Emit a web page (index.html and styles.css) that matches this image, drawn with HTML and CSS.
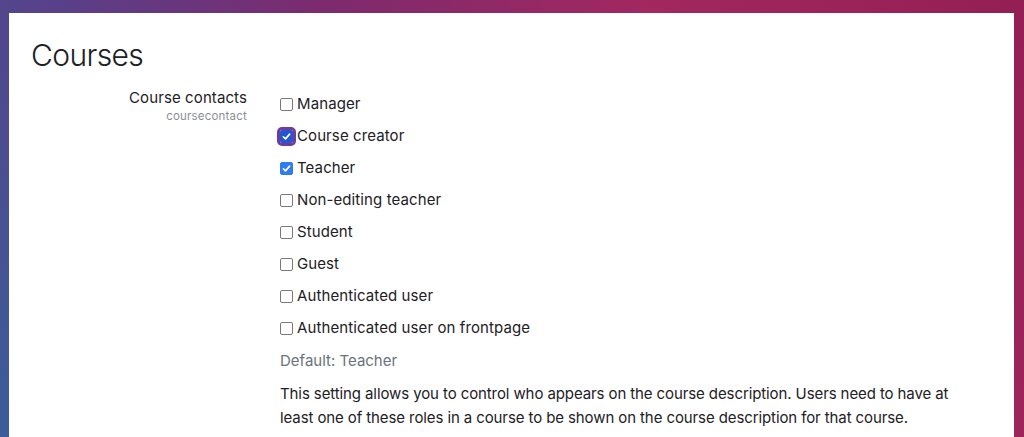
FILE: index.html
```html
<!DOCTYPE html>
<html lang="en">
<head>
<meta charset="utf-8">
<title>Courses</title>
<link rel="stylesheet" href="styles.css">
</head>
<body>
<main class="card">
  <h2 class="title">Courses</h2>
  <div class="setting">
    <div class="label-col">
      <div class="label">Course contacts</div>
      <div class="sublabel">coursecontact</div>
    </div>
    <div class="control-col">
      <label class="opt"><span class="box"></span>Manager</label>
      <label class="opt"><span class="box checked focused"><svg viewBox="0 0 12 12"><path d="M2.6 6.3 L4.9 8.6 L9.4 3.4" /></svg></span>Course creator</label>
      <label class="opt"><span class="box checked"><svg viewBox="0 0 12 12"><path d="M2.6 6.3 L4.9 8.6 L9.4 3.4" /></svg></span>Teacher</label>
      <label class="opt"><span class="box"></span>Non-editing teacher</label>
      <label class="opt"><span class="box"></span>Student</label>
      <label class="opt"><span class="box"></span>Guest</label>
      <label class="opt"><span class="box"></span>Authenticated user</label>
      <label class="opt"><span class="box"></span>Authenticated user on frontpage</label>
      <div class="default">Default: Teacher</div>
      <p class="desc">This setting allows you to control who appears on the course description. Users need to have at least one of these roles in a course to be shown on the course description for that course.</p>
    </div>
  </div>
</main>
</body>
</html>
```

FILE: styles.css
```css
html, body {
  margin: 0;
  height: 100%;
  overflow: hidden;
}
body {
  background: linear-gradient(60deg, #3b5d9a 0%, #5a3f88 25%, #7d2a6e 45%, #a2285f 70%, #931f55 100%);
  font-family: Inter, "Noto Sans", "Liberation Sans", sans-serif;
  color: #1d2125;
  padding: 13px 10px 0 9px;
  box-sizing: border-box;
}
.card {
  background: #fff;
  height: 500px;
  padding: 24px 22px 0 22px;
  box-sizing: border-box;
}
.title {
  margin: 0 0 14px 0;
  font-weight: 300;
  font-size: 30px;
  line-height: 36px;
  color: #1d2125;
  letter-spacing: -0.6px;
}
.setting {
  display: flex;
}
.label-col {
  width: 216px;
  text-align: right;
  padding-right: 33px;
}
.label {
  font-size: 15px;
  line-height: 22px;
  letter-spacing: 0.1px;
}
.sublabel {
  font-size: 11.5px;
  color: #8a8f95;
  line-height: 14px;
  letter-spacing: 0.2px;
}
.control-col {
  flex: 1;
  padding-top: 1px;
}
.opt {
  display: flex;
  align-items: center;
  height: 32px;
  margin-top: -7px;
  margin-bottom: 7px;
  font-size: 15px;
  line-height: 22px;
  letter-spacing: 0.1px;
}
.opt:first-child {
  margin-top: 0;
}
.box {
  width: 11px;
  height: 11px;
  border: 1px solid #7a7a7a;
  border-radius: 2px;
  margin-right: 4px;
  display: flex;
  align-items: center;
  justify-content: center;
  flex: none;
  background: #fff;
}
.box.checked {
  background: #2f7bf0;
  border-color: #2f7bf0;
}
.box svg {
  width: 11px;
  height: 11px;
}
.box svg path {
  fill: none;
  stroke: #fff;
  stroke-width: 1.8;
  stroke-linecap: round;
  stroke-linejoin: round;
}
.box.focused {
  background: #2556d0;
  border-color: #2556d0;
  outline: 3px solid #6f3c9a;
  outline-offset: 0;
}
.default {
  font-size: 15px;
  line-height: 22px;
  color: #6a737b;
  margin-top: -1px;
}
.desc {
  font-size: 15px;
  line-height: 24px;
  margin: 10px 0 0 0;
  max-width: 690px;
  letter-spacing: -0.1px;
}
```
